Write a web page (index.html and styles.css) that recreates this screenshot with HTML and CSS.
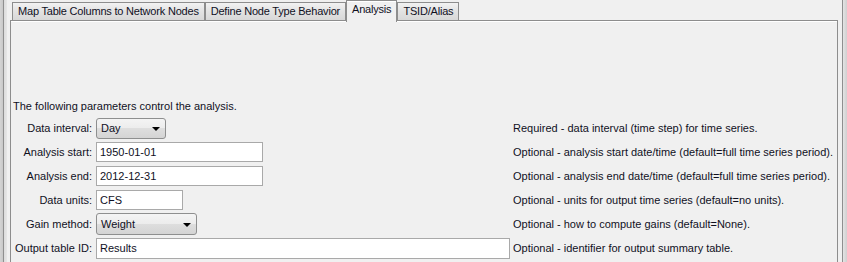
FILE: index.html
```html
<!DOCTYPE html>
<html lang="en">
<head>
    <meta charset="UTF-8">
    <title>Analysis</title>
    <link rel="stylesheet" href="styles.css">
</head>
<body>
    <div class="frame">
        <div class="edge edge-left"></div>

        <div class="pane">
            <div class="tabs">
                <div class="tab">Map Table Columns to Network Nodes</div>
                <div class="tab">Define Node Type Behavior</div>
                <div class="tab selected">Analysis</div>
                <div class="tab">TSID/Alias</div>
            </div>

            <div class="panel">
                <p class="intro">The following parameters control the analysis.</p>

                <div class="form">
                    <label class="label">Data interval:</label>
                    <div class="field">
                        <div class="combo combo-interval">Day<span class="arrow"></span></div>
                    </div>
                    <div class="desc">Required - data interval (time step) for time series.</div>

                    <label class="label">Analysis start:</label>
                    <div class="field"><div class="text text-date">1950-01-01</div></div>
                    <div class="desc">Optional - analysis start date/time (default=full time series period).</div>

                    <label class="label">Analysis end:</label>
                    <div class="field"><div class="text text-date">2012-12-31</div></div>
                    <div class="desc">Optional - analysis end date/time (default=full time series period).</div>

                    <label class="label">Data units:</label>
                    <div class="field"><div class="text text-units">CFS</div></div>
                    <div class="desc">Optional - units for output time series (default=no units).</div>

                    <label class="label">Gain method:</label>
                    <div class="field">
                        <div class="combo combo-gain">Weight<span class="arrow"></span></div>
                    </div>
                    <div class="desc">Optional - how to compute gains (default=None).</div>

                    <label class="label">Output table ID:</label>
                    <div class="field"><div class="text text-wide">Results</div></div>
                    <div class="desc">Optional - identifier for output summary table.</div>
                </div>
            </div>
        </div>

        <div class="edge edge-right"></div>
    </div>
</body>
</html>
```

FILE: styles.css
```css
:root {
    --bg: #f0f0f0;
    --border: #8d8d8d;
    --text: #10101e;
}

* {
    margin: 0;
    padding: 0;
    box-sizing: border-box;
}

body {
    background: var(--bg);
    color: var(--text);
    font-family: 'Liberation Sans', Arial, sans-serif;
    font-size: 11px;
}

.frame {
    display: flex;
    height: 262px;
    overflow: hidden;
}

.edge {
    flex: none;
    width: 10px;
}

.edge-left {
    background: linear-gradient(90deg, #d4d4d4 0, #c8c8c8 3px, #8f8f8f 3px, #8f8f8f 4px, #dcdcdc 4px, #e6e6e6 7px, var(--bg) 7px);
}

.edge-right {
    width: 9px;
    background: linear-gradient(90deg, var(--bg) 0, var(--bg) 4px, #8f8f8f 4px, #8f8f8f 5px, #e4e4e4 5px, #d0d0d0 9px);
}

.pane {
    width: 828px;
    display: flex;
    flex-direction: column;
}

/* tabs */
.tabs {
    display: flex;
    align-items: flex-end;
    height: 21px;
    padding-left: 2px;
    position: relative;
    z-index: 1;
}

.tab {
    height: 18px;
    margin-bottom: 1px;
    padding: 0 5px;
    border: 1px solid var(--border);
    border-bottom: none;
    background: linear-gradient(#f2f2f2, #e2e2e2 50%, #d8d8d8);
    line-height: 16px;
    letter-spacing: -0.2px;
    white-space: nowrap;
}

.tab.selected {
    height: 22px;
    margin-bottom: -1px;
    padding: 0 5px;
    background: var(--bg);
    line-height: 17px;
    box-shadow: inset 0 1px 0 #ffffff;
}

.panel {
    flex: 1;
    border: 1px solid var(--border);
    border-bottom: none;
    box-shadow: inset 0 1px 0 #ffffff;
    margin-top: -1px;
    padding: 78px 2px 0;
}

.intro {
    height: 14px;
    line-height: 14px;
    margin-bottom: 3px;
}

/* form grid */
.form {
    display: grid;
    grid-template-columns: 79px 413px 1fr;
    grid-auto-rows: 24px;
    column-gap: 4px;
    align-items: center;
}

.label {
    text-align: right;
    white-space: nowrap;
}

.desc {
    white-space: nowrap;
}

.text {
    height: 20px;
    line-height: 18px;
    padding-left: 3px;
    background: #ffffff;
    border: 1px solid #a9a9a9;
}

.text-date { width: 167px; }
.text-units { width: 87px; }
.text-wide { width: 414px; height: 21px; }

.combo {
    position: relative;
    height: 21px;
    line-height: 19px;
    padding-left: 4px;
    border: 1px solid #8e8f8f;
    border-radius: 3px;
    background: linear-gradient(#f4f4f4, #ececec 50%, #dedede 50%, #d4d4d4);
}

.combo-interval { width: 70px; }
.combo-gain { width: 101px; height: 22px; line-height: 20px; }

.arrow {
    position: absolute;
    right: 5px;
    top: 50%;
    margin-top: -1px;
    border-left: 4px solid transparent;
    border-right: 4px solid transparent;
    border-top: 4px solid #000000;
}
```
